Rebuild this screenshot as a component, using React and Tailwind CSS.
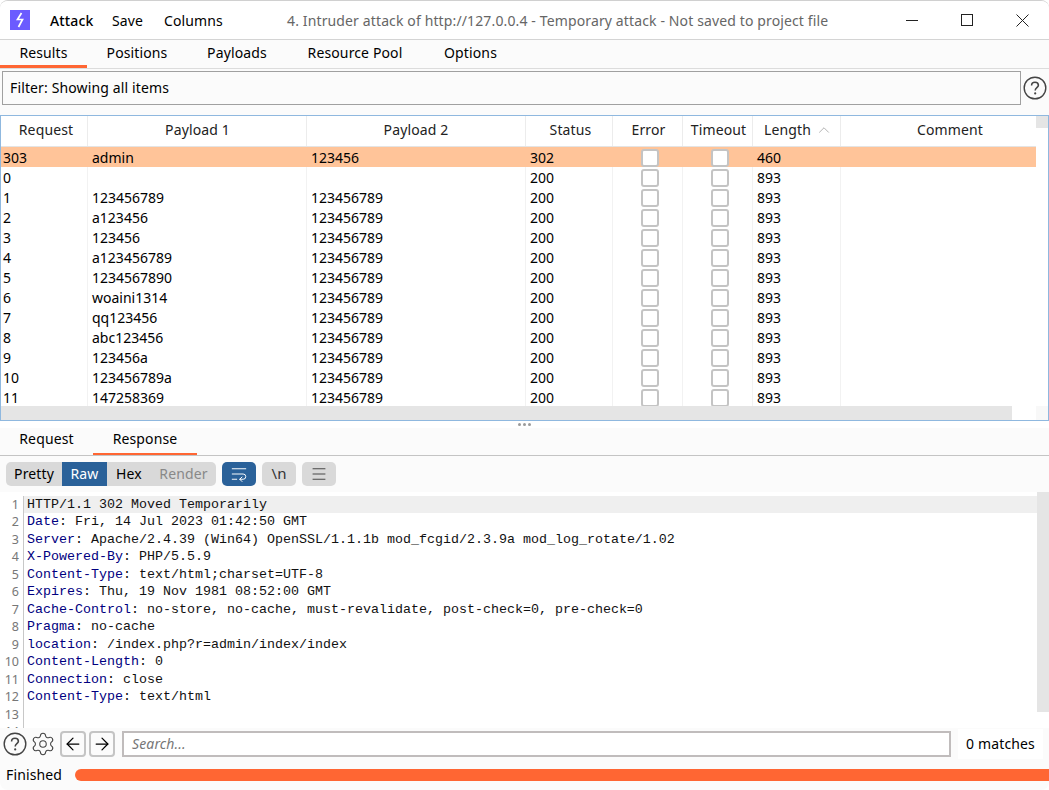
import React from 'react';
import { ArrowLeft, ArrowRight, Settings, WrapText, Menu, ChevronUp } from 'lucide-react';

const rows = [
  ['303', 'admin', '123456', '302', '460'],
  ['0', '', '', '200', '893'],
  ['1', '123456789', '123456789', '200', '893'],
  ['2', 'a123456', '123456789', '200', '893'],
  ['3', '123456', '123456789', '200', '893'],
  ['4', 'a123456789', '123456789', '200', '893'],
  ['5', '1234567890', '123456789', '200', '893'],
  ['6', 'woaini1314', '123456789', '200', '893'],
  ['7', 'qq123456', '123456789', '200', '893'],
  ['8', 'abc123456', '123456789', '200', '893'],
  ['9', '123456a', '123456789', '200', '893'],
  ['10', '123456789a', '123456789', '200', '893'],
  ['11', '147258369', '123456789', '200', '893'],
];

const lines = [
  ['', 'HTTP/1.1 302 Moved Temporarily'],
  ['Date', ' Fri, 14 Jul 2023 01:42:50 GMT'],
  ['Server', ' Apache/2.4.39 (Win64) OpenSSL/1.1.1b mod_fcgid/2.3.9a mod_log_rotate/1.02'],
  ['X-Powered-By', ' PHP/5.5.9'],
  ['Content-Type', ' text/html;charset=UTF-8'],
  ['Expires', ' Thu, 19 Nov 1981 08:52:00 GMT'],
  ['Cache-Control', ' no-store, no-cache, must-revalidate, post-check=0, pre-check=0'],
  ['Pragma', ' no-cache'],
  ['location', ' /index.php?r=admin/index/index'],
  ['Content-Length', ' 0'],
  ['Connection', ' close'],
  ['Content-Type', ' text/html'],
  ['', ''],
];

const gridCols = 'grid grid-cols-[87px_219px_219px_87px_70px_70px_88px_195px]';

const headerCols = [
  ['Request', 'pl-[4px]'],
  ['Payload 1', 'pl-[1px]'],
  ['Payload 2', ''],
  ['Status', 'pl-[3px]'],
  ['Error', 'pl-[2px]'],
  ['Timeout', 'pl-[2px]'],
];

const HelpIcon = ({ size = 24 }) => (
  <svg width={size} height={size} viewBox="0 0 24 24" fill="none" className="shrink-0">
    <circle cx="12" cy="12" r="10.8" stroke="#444" strokeWidth="1.4" />
    <path d="M8.6 9.4c0-2 1.5-3.2 3.4-3.2s3.4 1.2 3.4 3c0 2.4-3.2 2.6-3.2 5.2" stroke="#444" strokeWidth="1.6" />
    <circle cx="12.2" cy="17.4" r="1.1" fill="#444" />
  </svg>
);

const Checkbox = () => (
  <div className="w-[18px] h-[18px] ml-[28px] rounded-[3px] border-2 border-[#c4c4c4] bg-white" />
);

const App = () => {
  return (
    <div className="w-[1049px] h-[790px] overflow-hidden flex flex-col bg-[#fbfbfb] text-[14px] tracking-[0.13px] text-black rounded-lg border-t border-[#d0d0d0] font-['Noto_Sans',sans-serif]">
      {/* Title bar */}
      <div className="h-[39px] shrink-0 flex items-center bg-white border-b border-[#d4d4d4]">
        <div className="ml-[10px] w-5 h-5 bg-[#6b5bff] flex items-center justify-center">
          <svg width="12" height="16" viewBox="0 0 12 16" fill="none">
            <path d="M7.5 1 3.5 7.5h5L4.5 15" stroke="white" strokeWidth="1.7" />
          </svg>
        </div>
        <span className="ml-5 w-[62px] font-medium">Attack</span>
        <span className="w-[52px]">Save</span>
        <span className="w-[123px]">Columns</span>
        <span className="w-[546px] text-[#666] whitespace-nowrap">4. Intruder attack of http://127.0.0.4 - Temporary attack - Not saved to project file</span>
        <svg width="12" height="12" viewBox="0 0 12 12" className="ml-[73px]">
          <path d="M0 6.5h12" stroke="#222" strokeWidth="1" />
        </svg>
        <svg width="12" height="12" viewBox="0 0 12 12" className="ml-[43px]">
          <rect x="0.5" y="0.5" width="11" height="11" fill="none" stroke="#222" strokeWidth="1" />
        </svg>
        <svg width="13" height="13" viewBox="0 0 13 13" className="ml-[43px]">
          <path d="M0.5 0.5l12 12M12.5 0.5l-12 12" stroke="#222" strokeWidth="1" />
        </svg>
      </div>

      {/* Top tabs */}
      <div className="h-[29px] shrink-0 flex items-end border-b border-[#dcdcdc]">
        <div className="w-[87px] h-full pt-[2px] text-center border-b-[3px] border-[#ff6633]">Results</div>
        <div className="w-[100px] h-full pt-[2px] text-center">Positions</div>
        <div className="w-[100px] h-full pt-[2px] text-center">Payloads</div>
        <div className="w-[136px] h-full pt-[2px] text-center">Resource Pool</div>
        <div className="w-[95px] h-full pt-[2px] text-center">Options</div>
      </div>

      {/* Filter */}
      <div className="h-[46px] shrink-0 flex items-start pt-[2px] pl-[2px]">
        <div className="w-[1019px] h-[34px] border border-[#a0a0a0] flex items-center pl-[7px] pb-[2px]">Filter: Showing all items</div>
        <div className="ml-[2px] mt-[5px]"><HelpIcon /></div>
      </div>

      {/* Results table */}
      <div className="h-[306px] shrink-0 flex flex-col bg-white border border-[#8fb8df] overflow-hidden">
        <div className="flex h-[290px] shrink-0">
          <div className="w-[1035px] flex flex-col">
            <div className={`${gridCols} h-[31px] shrink-0 border-b border-[#e4e4e4] text-[#222]`}>
              {headerCols.map(([h, cls]) => (
                <div key={h} className={`flex items-center justify-center pb-[3px] border-r border-[#ececec] ${cls}`}>{h}</div>
              ))}
              <div className="flex items-center justify-center gap-1 pl-[4px] pb-[3px] border-r border-[#ececec]">
                Length <ChevronUp size={18} strokeWidth={1.2} className="text-[#aaa]" />
              </div>
              <div className="flex items-center pl-[76px] pb-[3px] whitespace-nowrap">Comment</div>
            </div>
            {rows.map((r, i) => (
              <div key={r[0]} className={`${gridCols} h-5 shrink-0 leading-[22px] tracking-normal ${i === 0 ? 'bg-[#ffc499]' : ''}`}>
                <div className={`pl-[2px] ${i === 0 ? '' : 'border-r border-[#f2f2f2]'}`}>{r[0]}</div>
                <div className={`pl-1 ${i === 0 ? '' : 'border-r border-[#f2f2f2]'}`}>{r[1]}</div>
                <div className={`pl-1 ${i === 0 ? '' : 'border-r border-[#f2f2f2]'}`}>{r[2]}</div>
                <div className={`pl-1 ${i === 0 ? '' : 'border-r border-[#f2f2f2]'}`}>{r[3]}</div>
                <div className={`pt-[2px] ${i === 0 ? '' : 'border-r border-[#f2f2f2]'}`}><Checkbox /></div>
                <div className={`pt-[2px] ${i === 0 ? '' : 'border-r border-[#f2f2f2]'}`}><Checkbox /></div>
                <div className={`pl-1 ${i === 0 ? '' : 'border-r border-[#f2f2f2]'}`}>{r[4]}</div>
                <div />
              </div>
            ))}
          </div>
          <div className="w-3 shrink-0 bg-white">
            <div className="h-3 bg-[#e5e5e5]" />
          </div>
        </div>
        <div className="flex flex-1">
          <div className="w-[1011px] bg-[#e5e5e5]" />
          <div className="w-6" />
          <div className="flex-1 bg-[#f8f8f8]" />
        </div>
      </div>

      {/* Split handle */}
      <div className="h-[7px] shrink-0 bg-white flex items-center justify-center gap-[2px]">
        <div className="w-[3px] h-[3px] rounded-full bg-[#9a9a9a]" />
        <div className="w-[3px] h-[3px] rounded-full bg-[#9a9a9a]" />
        <div className="w-[3px] h-[3px] rounded-full bg-[#9a9a9a]" />
      </div>

      {/* Request / Response tabs */}
      <div className="h-[28px] shrink-0 flex border-b border-[#c4c4c4]">
        <div className="w-[93px] h-full text-center">Request</div>
        <div className="w-[104px] h-full text-center border-b-[2px] border-[#ff6633]">Response</div>
      </div>

      {/* Message toolbar */}
      <div className="h-[36px] shrink-0 flex items-center pl-[6px]">
        <div className="h-6 flex items-center bg-[#d9d9d9] rounded-[5px] overflow-hidden">
          <div className="w-[56px] h-full flex items-center justify-center pb-[2px]">Pretty</div>
          <div className="w-[45px] h-full flex items-center justify-center pb-[2px] bg-[#2a6199] text-white">Raw</div>
          <div className="w-[44px] h-full flex items-center justify-center pb-[2px]">Hex</div>
          <div className="w-[65px] h-full flex items-center justify-center pb-[2px] text-[#888]">Render</div>
        </div>
        <div className="ml-[6px] w-[34px] h-6 rounded-[5px] bg-[#2a6199] flex items-center justify-center text-white">
          <WrapText size={18} strokeWidth={1.3} />
        </div>
        <div className="ml-[6px] w-[34px] h-6 rounded-[5px] bg-[#d9d9d9] flex items-center justify-center pb-[2px] text-[#333] text-[15px]">\n</div>
        <div className="ml-[6px] w-[34px] h-6 rounded-[5px] bg-[#d9d9d9] flex items-center justify-center text-[#444]">
          <Menu size={18} strokeWidth={1.3} />
        </div>
      </div>

      {/* Editor */}
      <div className="h-[236px] shrink-0 flex bg-white overflow-hidden font-['Liberation_Mono',monospace] text-[13.33px] leading-[17.5px] tracking-normal text-[#111]">
        <div className="flex-1 flex pt-[3.5px]">
          <div className="w-6 shrink-0 border-r border-[#c8c8c8] h-[233px] overflow-hidden text-right pr-1 text-[#777] font-['Noto_Sans',sans-serif] text-[12.5px]">
            {[...lines, ['', '']].map((_, i) => (
              <div key={i}>{i + 1}</div>
            ))}
          </div>
          <div className="flex-1">
            {lines.map(([k, v], i) => (
              <div key={i} className={`h-[17.5px] pl-[3px] whitespace-pre ${i === 0 ? 'bg-[#efefef]' : ''}`}>
                {k ? <span className="text-[#000080]">{k}</span> : null}
                {k ? ':' : ''}{v}
              </div>
            ))}
          </div>
        </div>
        <div className="w-3 shrink-0">
          <div className="h-[220px] bg-[#e5e5e5]" />
        </div>
      </div>

      {/* Search bar */}
      <div className="h-[32px] shrink-0 flex items-center pl-[3px]">
        <HelpIcon />
        <Settings size={26} strokeWidth={1} className="ml-[3px] text-[#444]" />
        <div className="ml-[4px] w-[26px] h-[26px] border-2 border-[#c4c4c4] rounded-[4px] flex items-center justify-center">
          <ArrowLeft size={20} strokeWidth={1.5} />
        </div>
        <div className="ml-[3px] w-[26px] h-[26px] border-2 border-[#c4c4c4] rounded-[4px] flex items-center justify-center">
          <ArrowRight size={20} strokeWidth={1.5} />
        </div>
        <div className="ml-[7px] w-[829px] h-[26px] bg-white border-2 border-[#c0bcbc] flex items-center pl-2 pb-[2px] italic text-[#777]">Search...</div>
        <div className="ml-[7px] w-[85px] h-[30px] bg-white flex items-center justify-center pb-[2px]">0 matches</div>
      </div>

      {/* Status bar */}
      <div className="flex-1 flex items-center pl-[6px] pb-[1px]">
        <span className="w-[69px] shrink-0">Finished</span>
        <div className="flex-1 h-3 rounded-l-full rounded-r-md bg-[#ff6633]" />
      </div>
    </div>
  );
};

export default App;
